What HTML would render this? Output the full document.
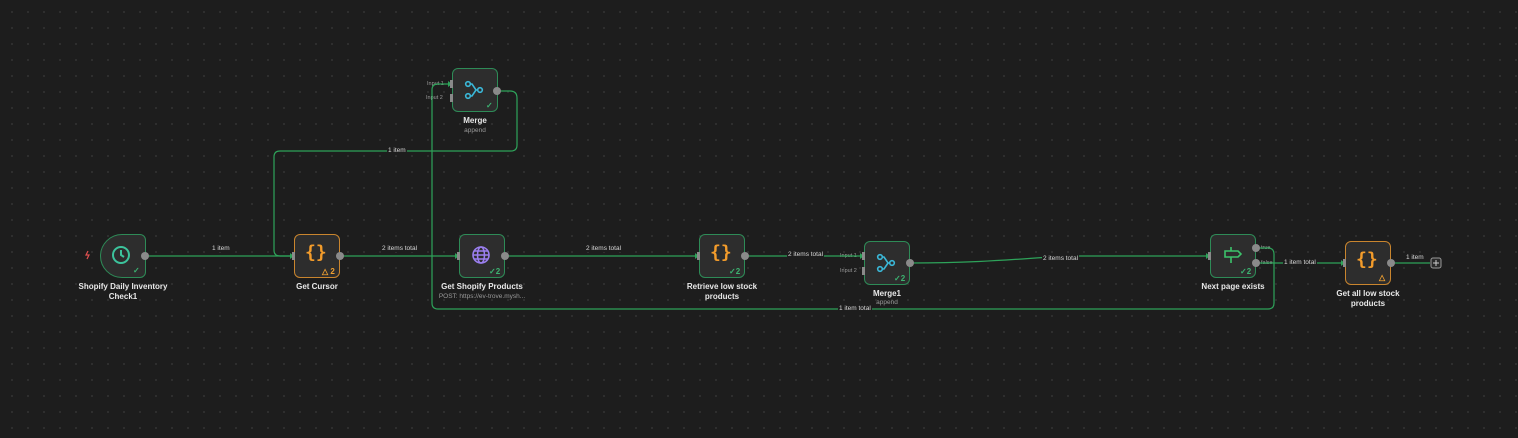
<!DOCTYPE html><html><head><style>
body{margin:0;width:1518px;height:438px;overflow:hidden;background:#1d1d1d;background-image:radial-gradient(#333 0.9px,transparent 1px);background-size:16px 16px;background-position:4px 4px;font-family:"Liberation Sans",sans-serif;position:relative}
.n{position:absolute;width:44px;height:42px;background:#2d2d2d;border:1.5px solid #2e8b57;border-radius:6px;box-sizing:content-box}
.o{border-color:#c9852e}
.lbl{position:absolute;color:#e8e8e8;font-size:8px;font-weight:bold;text-align:center;width:140px;line-height:10px}
.sub{position:absolute;color:#9a9a9a;font-size:6.5px;text-align:center;width:140px}
.el{position:absolute;color:#d8d8d8;font-size:6.5px;background:#1d1d1d;padding:0 1px;z-index:3}
.in{position:absolute;color:#999;font-size:5.5px}
.ck{position:absolute;color:#3cb371;font-size:8px;font-weight:bold}
.br{position:absolute;font-family:"DejaVu Sans Mono",monospace;color:#f39c2b;font-size:18px;font-weight:bold}
</style></head><body>
<div class="n" style="left:100px;top:234px;border-radius:22px 6px 6px 22px"></div>
<svg style="position:absolute;left:111px;top:245px" width="20" height="20"><circle cx="10" cy="10" r="8" fill="none" stroke="#3cc39c" stroke-width="2"/><path d="M10 5v5l3 2" stroke="#3cc39c" stroke-width="2" fill="none"/></svg>
<div class="ck" style="left:133px;top:266px">✓</div>
<div class="lbl" style="left:53px;top:282px">Shopify Daily Inventory<br>Check1</div>
<div class="n o" style="left:294px;top:234px"></div><div class="br" style="left:305px;top:242px">{}</div>
<div class="ck" style="left:322px;top:267px;color:#f0a030">△ 2</div>
<div class="lbl" style="left:247px;top:282px">Get Cursor</div>
<div class="n" style="left:459px;top:234px"></div>
<svg style="position:absolute;left:471px;top:245px" width="20" height="20"><g fill="none" stroke="#9b7ff0" stroke-width="1.6"><circle cx="10" cy="10" r="8"/><ellipse cx="10" cy="10" rx="3.5" ry="8"/><path d="M2 10h16M3.5 6h13M3.5 14h13"/></g></svg>
<div class="ck" style="left:489px;top:267px">✓2</div>
<div class="lbl" style="left:412px;top:282px">Get Shopify Products</div>
<div class="sub" style="left:412px;top:293px">POST: https://ev-trove.mysh...</div>
<div class="n" style="left:699px;top:234px"></div><div class="br" style="left:710px;top:242px">{}</div>
<div class="ck" style="left:729px;top:267px">✓2</div>
<div class="lbl" style="left:652px;top:282px">Retrieve low stock<br>products</div>
<div class="n" style="left:864px;top:241px"></div>
<svg style="position:absolute;left:876px;top:253px" width="20" height="20"><g fill="none" stroke="#3bb8d8" stroke-width="1.6"><circle cx="4" cy="4" r="2.3"/><circle cx="4" cy="16" r="2.3"/><circle cx="16" cy="10" r="2.3"/><path d="M6 4h2l4 6h2M6 16h2l4-6"/></g></svg>
<div class="ck" style="left:894px;top:274px">✓2</div>
<div class="lbl" style="left:817px;top:289px">Merge1</div><div class="sub" style="left:817px;top:299px">append</div>
<div class="in" style="left:840px;top:253px">Input 1</div><div class="in" style="left:840px;top:268px">Input 2</div>
<div class="n" style="left:452px;top:68px"></div>
<svg style="position:absolute;left:464px;top:80px" width="20" height="20"><g fill="none" stroke="#3bb8d8" stroke-width="1.6"><circle cx="4" cy="4" r="2.3"/><circle cx="4" cy="16" r="2.3"/><circle cx="16" cy="10" r="2.3"/><path d="M6 4h2l4 6h2M6 16h2l4-6"/></g></svg>
<div class="ck" style="left:486px;top:101px">✓</div>
<div class="lbl" style="left:405px;top:116px">Merge</div><div class="sub" style="left:405px;top:127px">append</div>
<div class="in" style="left:427px;top:81px">Input 1</div><div class="in" style="left:426px;top:95px">Input 2</div>
<div class="n" style="left:1210px;top:234px"></div>
<svg style="position:absolute;left:1222px;top:245px" width="22" height="20"><g fill="none" stroke="#3cc36b" stroke-width="1.6"><path d="M3 6h13l3 3-3 3H3zM9 2v4M9 12v6"/></g></svg>
<div class="ck" style="left:1240px;top:267px">✓2</div>
<div class="in" style="left:1261px;top:245px">true</div><div class="in" style="left:1261px;top:260px">false</div>
<div class="lbl" style="left:1163px;top:282px">Next page exists</div>
<div class="n o" style="left:1345px;top:241px"></div><div class="br" style="left:1356px;top:249px">{}</div>
<div class="ck" style="left:1379px;top:273px;color:#f0a030">△</div>
<div class="lbl" style="left:1298px;top:289px">Get all low stock<br>products</div>
<svg width="1518" height="438" style="position:absolute;left:0;top:0;z-index:2">
<g fill="none" stroke="#2ea35a" stroke-width="1.2">
<path d="M146 256H294"/><path d="M340 256H459"/><path d="M505 256H699"/><path d="M745 256H864"/>
<path d="M910 263C1000 263 1040 256 1080 256H1210"/><path d="M1256 263H1345"/><path d="M1391 263H1430"/>
<path d="M498 91H510Q517 91 517 98V145Q517 151 511 151H280Q274 151 274 157V250Q274 256 280 256H294"/>
<path d="M1256 248H1268Q1274 248 1274 254V303Q1274 309 1268 309H438Q432 309 432 303V90Q432 84 438 84H452"/>
</g>
<g fill="#2ea35a"><path d="M290 253l4 3-4 3z"/><path d="M455 253l4 3-4 3z"/><path d="M695 253l4 3-4 3z"/><path d="M860 253l4 3-4 3z"/><path d="M1206 253l4 3-4 3z"/><path d="M1341 260l4 3-4 3z"/><path d="M448 81l4 3-4 3z"/></g>
<g fill="#8a8a8a">
<circle cx="145" cy="256" r="4"/><circle cx="340" cy="256" r="4"/><circle cx="505" cy="256" r="4"/><circle cx="745" cy="256" r="4"/><circle cx="910" cy="263" r="4"/><circle cx="1256" cy="248" r="4"/><circle cx="1256" cy="263" r="4"/><circle cx="1391" cy="263" r="4"/><circle cx="497" cy="91" r="4"/>
<rect x="292" y="252" width="3" height="8"/><rect x="457" y="252" width="3" height="8"/><rect x="697" y="252" width="3" height="8"/><rect x="862" y="252" width="3" height="8"/><rect x="862" y="267" width="3" height="8"/><rect x="1208" y="252" width="3" height="8"/><rect x="1343" y="259" width="3" height="8"/><rect x="450" y="80" width="3" height="8"/><rect x="450" y="94" width="3" height="8"/>
</g>
<rect x="1431" y="258" width="10" height="10" rx="2" fill="#2a2a2a" stroke="#999"/><path d="M1436 260v6M1433 263h6" stroke="#ccc"/>
<path d="M88 251l-2 4h3l-2 4" stroke="#e05050" stroke-width="1.2" fill="none"/>
</svg>
<div class="el" style="left:211px;top:245px">1 item</div>
<div class="el" style="left:381px;top:245px">2 items total</div>
<div class="el" style="left:585px;top:245px">2 items total</div>
<div class="el" style="left:787px;top:251px">2 items total</div>
<div class="el" style="left:1042px;top:255px">2 items total</div>
<div class="el" style="left:1283px;top:259px">1 item total</div>
<div class="el" style="left:1405px;top:254px">1 item</div>
<div class="el" style="left:387px;top:147px">1 item</div>
<div class="el" style="left:838px;top:305px">1 item total</div>
</body></html>
